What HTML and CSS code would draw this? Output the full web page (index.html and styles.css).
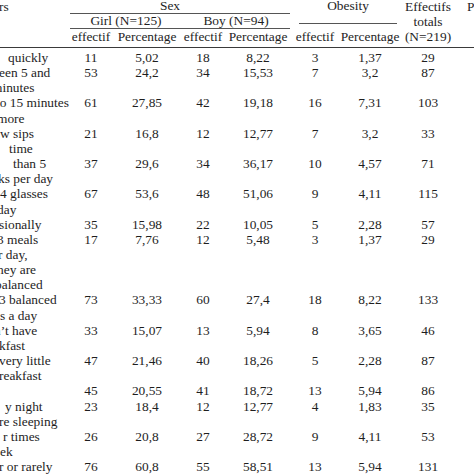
FILE: index.html
```html
<!DOCTYPE html>
<html>
<head>
<meta charset="utf-8">
<link rel="stylesheet" href="styles.css">
</head>
<body>
<div class="fig">
<table class="tbl">
<colgroup>
<col class="c-lab"><col class="c-ge"><col class="c-gp"><col class="c-be"><col class="c-bp"><col class="c-oe"><col class="c-op"><col class="c-tot"><col class="c-pv">
</colgroup>
<thead>
<tr class="h1">
<th rowspan="3" class="lab top"><span class="ln om1">rs</span></th>
<th colspan="4"><div class="rule sex">Sex</div></th>
<th colspan="2" rowspan="2" class="top"><div class="rule obr">Obesity</div></th>
<th rowspan="3" class="top tot">Effectifs<br>totals<br>(N=219)</th>
<th rowspan="3" class="top pv">P</th>
</tr>
<tr class="h2">
<th colspan="2"><div class="rule girl">Girl (N=125)</div></th>
<th colspan="2"><div class="rule boy">Boy (N=94)</div></th>
</tr>
<tr class="h3">
<th>effectif</th><th>Percentage</th><th>effectif</th><th>Percentage</th><th>effectif</th><th>Percentage</th>
</tr>
</thead>
<tbody>
<tr><td class="lab"><span class="ln o8">quickly</span></td><td>11</td><td>5,02</td><td>18</td><td>8,22</td><td>3</td><td>1,37</td><td>29</td><td></td></tr>
<tr><td class="lab"><span class="ln om1">een 5 and</span><span class="ln om8">minutes</span></td><td>53</td><td>24,2</td><td>34</td><td>15,53</td><td>7</td><td>3,2</td><td>87</td><td></td></tr>
<tr><td class="lab"><span class="ln om4">to 15 minutes</span><span class="ln om3">more</span></td><td>61</td><td>27,85</td><td>42</td><td>19,18</td><td>16</td><td>7,31</td><td>103</td><td></td></tr>
<tr><td class="lab"><span class="ln o0">w sips</span><span class="ln o9">time</span></td><td>21</td><td>16,8</td><td>12</td><td>12,77</td><td>7</td><td>3,2</td><td>33</td><td></td></tr>
<tr><td class="lab"><span class="ln o13">than 5</span><span class="ln om2">ks per day</span></td><td>37</td><td>29,6</td><td>34</td><td>36,17</td><td>10</td><td>4,57</td><td>71</td><td></td></tr>
<tr><td class="lab"><span class="ln o0">4 glasses</span><span class="ln om3">day</span></td><td>67</td><td>53,6</td><td>48</td><td>51,06</td><td>9</td><td>4,11</td><td>115</td><td></td></tr>
<tr><td class="lab"><span class="ln om1">sionally</span></td><td>35</td><td>15,98</td><td>22</td><td>10,05</td><td>5</td><td>2,28</td><td>57</td><td></td></tr>
<tr><td class="lab"><span class="ln om3">3 meals</span><span class="ln om2">r day,</span><span class="ln om3">hey are</span><span class="ln om5">balanced</span></td><td>17</td><td>7,76</td><td>12</td><td>5,48</td><td>3</td><td>1,37</td><td>29</td><td></td></tr>
<tr><td class="lab"><span class="ln om1">3 balanced</span><span class="ln o0">s a day</span></td><td>73</td><td>33,33</td><td>60</td><td>27,4</td><td>18</td><td>8,22</td><td>133</td><td></td></tr>
<tr><td class="lab"><span class="ln om6">n’t have</span><span class="ln om1">kfast</span></td><td>33</td><td>15,07</td><td>13</td><td>5,94</td><td>8</td><td>3,65</td><td>46</td><td></td></tr>
<tr><td class="lab"><span class="ln om1">very little</span><span class="ln om1">reakfast</span></td><td>47</td><td>21,46</td><td>40</td><td>18,26</td><td>5</td><td>2,28</td><td>87</td><td></td></tr>
<tr><td class="lab"></td><td>45</td><td>20,55</td><td>41</td><td>18,72</td><td>13</td><td>5,94</td><td>86</td><td></td></tr>
<tr><td class="lab"><span class="ln o5">y night</span><span class="ln om1">re sleeping</span></td><td>23</td><td>18,4</td><td>12</td><td>12,77</td><td>4</td><td>1,83</td><td>35</td><td></td></tr>
<tr><td class="lab"><span class="ln o3">r times</span><span class="ln o0">ek</span></td><td>26</td><td>20,8</td><td>27</td><td>28,72</td><td>9</td><td>4,11</td><td>53</td><td></td></tr>
<tr><td class="lab"><span class="ln om1">r or rarely</span></td><td>76</td><td>60,8</td><td>55</td><td>58,51</td><td>13</td><td>5,94</td><td>131</td><td></td></tr>
</tbody>
</table>
</div>
</body>
</html>
```

FILE: styles.css
```css
html, body {
  margin: 0;
  padding: 0;
  background: #ffffff;
}
body {
  width: 474px;
  height: 474px;
  overflow: hidden;
  font-family: "Liberation Serif", "Times New Roman", serif;
  font-size: 13.4px;
  color: #1e1e1e;
}
.fig {
  width: 474px;
}
.tbl {
  margin-top: -1.5px;
  width: 474px;
  table-layout: fixed;
  border-collapse: collapse;
  border-spacing: 0;
}
.c-lab { width: 70px; }
.c-ge { width: 42px; }
.c-gp { width: 70px; }
.c-be { width: 42px; }
.c-bp { width: 68px; }
.c-oe { width: 46px; }
.c-op { width: 64px; }
.c-tot { width: 52px; }
.c-pv { width: 20px; }

th, td {
  padding: 0;
  font-weight: normal;
  text-align: center;
  vertical-align: top;
  line-height: 15.15px;
  white-space: nowrap;
}
thead {
  border-bottom: 1.5px solid #3a3a3a;
}
.h1 th, .h2 th {
  line-height: 14.15px;
}
.h3 th {
  padding-bottom: 3px;
}
.h1 th.top {
  line-height: 15.15px;
}
.rule {
  border-bottom: 1px solid #555555;
}
.sex {
  margin-right: 2px;
  padding-right: 20px;
}
.boy {
  margin-right: 2px;
}
.obr {
  line-height: 14.15px;
  padding-bottom: 10px;
  margin: 0 5px 0 7px;
}
.pv {
  text-align: left;
  padding-left: 13px;
}
tbody tr:first-child td {
  padding-top: 2px;
}
td.lab, th.lab {
  text-align: left;
}
.ln {
  display: block;
}
.o0 { margin-left: 0; }
.o3 { margin-left: 3px; }
.o5 { margin-left: 5px; }
.o8 { margin-left: 8px; }
.o9 { margin-left: 9px; }
.o13 { margin-left: 13px; }
.om1 { margin-left: -1px; }
.om2 { margin-left: -2px; }
.om3 { margin-left: -3px; }
.om4 { margin-left: -4px; }
.om5 { margin-left: -5px; }
.om6 { margin-left: -6px; }
.om8 { margin-left: -8px; }
```
